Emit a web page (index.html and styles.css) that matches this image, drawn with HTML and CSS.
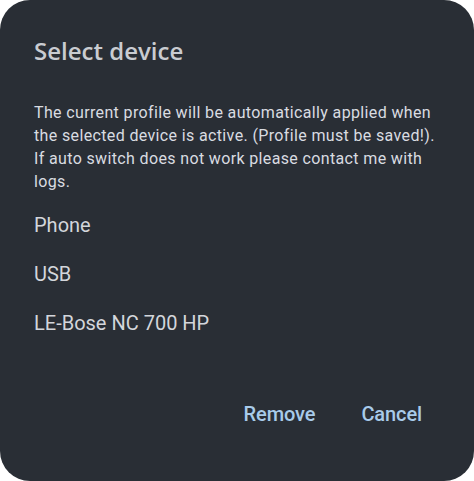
FILE: index.html
```html
<!DOCTYPE html>
<html>
<head>
<meta charset="utf-8">
<link rel="stylesheet" href="styles.css">
</head>
<body>
<div class="dialog">
  <h1 class="title">Select device</h1>
  <p class="message">The current profile will be automatically applied when the selected device is active. (Profile must be saved!). If auto switch does not work please contact me with logs.</p>
  <ul class="list">
    <li class="item">Phone</li>
    <li class="item">USB</li>
    <li class="item">LE-Bose NC 700 HP</li>
  </ul>
  <div class="actions">
    <button class="btn">Remove</button>
    <button class="btn">Cancel</button>
  </div>
</div>
</body>
</html>
```
FILE: styles.css
```css
html, body {
  margin: 0;
  padding: 0;
  background: #ffffff;
}
body {
  width: 474px;
  height: 481px;
  overflow: hidden;
}
.dialog {
  box-sizing: border-box;
  width: 474px;
  height: 481px;
  background: #292e35;
  border-radius: 30px;
  padding: 36px 34px 0 34px;
  display: flex;
  flex-direction: column;
  font-family: Roboto, "Noto Sans", sans-serif;
}
.title {
  margin: 0;
  font-family: "Open Sans", Roboto, sans-serif;
  font-weight: 600;
  font-size: 24px;
  line-height: 30px;
  color: #c9ccd1;
}
.message {
  margin: 35px 0 0 0;
  font-size: 16px;
  line-height: 23px;
  letter-spacing: 0.36px;
  color: #d9dce1;
}
.list {
  list-style: none;
  margin: 8px 0 0 0;
  padding: 0;
}
.item {
  height: 49px;
  line-height: 49px;
  font-size: 20px;
  color: #d3d6db;
}
.actions {
  margin-top: auto;
  margin-bottom: 47px;
  margin-right: 10px;
  display: flex;
  justify-content: flex-end;
  gap: 30px;
}
.btn {
  background: none;
  border: none;
  padding: 8px;
  font-family: Roboto, sans-serif;
  font-weight: 500;
  font-size: 20px;
  line-height: 24px;
  letter-spacing: -0.1px;
  color: #a8cbea;
}
```
